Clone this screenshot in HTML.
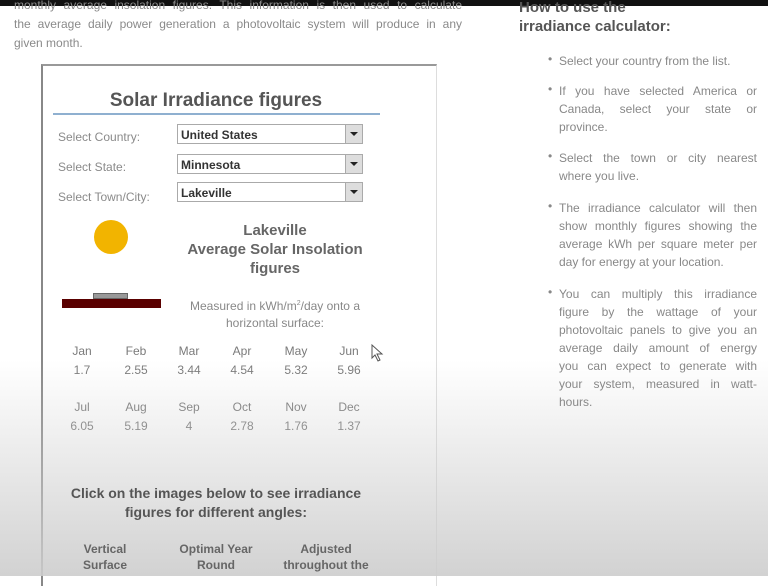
<!DOCTYPE html>
<html><head><meta charset="utf-8"><style>
body{margin:0;width:768px;height:576px;overflow:hidden;background:#fff;font-family:"Liberation Sans",sans-serif;position:relative}
.a{position:absolute;white-space:nowrap}
.g{color:#8a8a8a}
.sel{position:absolute;left:177px;width:186px;height:20px;border:1px solid #aaa;background:#fff;box-sizing:border-box}
.sel span{position:absolute;left:3px;top:3px;font-size:12px;color:#333;font-weight:bold}
.sel i{position:absolute;right:0;top:0;width:16px;height:18px;background:#ddd;border-left:1px solid #aaa}
.sel i:after{content:"";position:absolute;left:4px;top:7px;border:4px solid transparent;border-top:4px solid #222}
.m{position:absolute;width:50px;text-align:center;font-size:12px;color:#7a7a7a;line-height:19px}
.c{text-align:center;transform:translateX(-50%)}
.j{text-align:justify;text-align-last:justify;white-space:nowrap}
.l{white-space:nowrap}
.r{position:absolute;left:559px;width:198px;font-size:12px;line-height:18px;color:#888}
.b{position:absolute;left:548px;font-size:12px;color:#888}
</style></head><body>
<div class="a" style="left:0;top:0;width:768px;height:6px;background:#111"></div>
<div class="a g" style="left:14px;top:-4px;font-size:12px;line-height:19px;width:448px">
<div class="j">monthly average insolation figures. This information is then used to calculate</div>
<div class="j">the average daily power generation a photovoltaic system will produce in any</div>
<div class="l">given month.</div></div>
<div class="a" style="left:41px;top:64px;width:393px;height:520px;border-left:2px solid #888;border-top:2px solid #999;border-right:1px solid #ddd"></div>
<div class="a c" style="left:216px;top:90px;font-size:19px;font-weight:bold;color:#555">Solar Irradiance figures</div>
<div class="a" style="left:53px;top:113px;width:327px;height:2px;background:#8fb0d0"></div>
<div class="a g" style="left:58px;top:130px;font-size:12px">Select Country:</div>
<div class="a g" style="left:58px;top:160px;font-size:12px">Select State:</div>
<div class="a g" style="left:58px;top:190px;font-size:12px">Select Town/City:</div>
<div class="sel" style="top:124px"><span>United States</span><i></i></div>
<div class="sel" style="top:154px"><span>Minnesota</span><i></i></div>
<div class="sel" style="top:182px"><span>Lakeville</span><i></i></div>
<div class="a" style="left:94px;top:220px;width:34px;height:34px;border-radius:50%;background:#f2b400"></div>
<div class="a c" style="left:275px;top:221px;font-size:15px;font-weight:bold;color:#666;line-height:19px">Lakeville<br>Average Solar Insolation<br>figures</div>
<div class="a" style="left:93px;top:293px;width:35px;height:6px;background:#999;border:1px solid #666;box-sizing:border-box"></div>
<div class="a" style="left:62px;top:299px;width:99px;height:9px;background:#5a0000"></div>
<div class="a c" style="left:275px;top:295px;font-size:12px;color:#888;line-height:17px">Measured in kWh/m<sup style="font-size:7px">2</sup>/day onto a<br>horizontal surface:</div>
<div class="m" style="left:57px;top:342px">Jan<br>1.7</div>
<div class="m" style="left:111px;top:342px">Feb<br>2.55</div>
<div class="m" style="left:164px;top:342px">Mar<br>3.44</div>
<div class="m" style="left:217px;top:342px">Apr<br>4.54</div>
<div class="m" style="left:271px;top:342px">May<br>5.32</div>
<div class="m" style="left:324px;top:342px">Jun<br>5.96</div>
<div class="m" style="left:57px;top:398px">Jul<br>6.05</div>
<div class="m" style="left:111px;top:398px">Aug<br>5.19</div>
<div class="m" style="left:164px;top:398px">Sep<br>4</div>
<div class="m" style="left:217px;top:398px">Oct<br>2.78</div>
<div class="m" style="left:271px;top:398px">Nov<br>1.76</div>
<div class="m" style="left:324px;top:398px">Dec<br>1.37</div>
<svg class="a" style="left:371px;top:344px" width="14" height="18"><path d="M1 1 L1 14 L4 11 L7 17 L9 16 L6 10 L11 10 Z" fill="#fff" stroke="#555" stroke-width="1"/></svg>
<div class="a" style="left:0;top:360px;width:768px;height:216px;background:linear-gradient(rgba(220,220,220,0),rgba(205,205,205,0.9))"></div>
<div class="a c" style="left:216px;top:484px;font-size:14px;font-weight:bold;color:#555;line-height:19px">Click on the images below to see irradiance<br>figures for different angles:</div>
<div class="a c" style="left:105px;top:541px;font-size:12px;font-weight:bold;color:#666;line-height:16px">Vertical<br>Surface</div>
<div class="a c" style="left:216px;top:541px;font-size:12px;font-weight:bold;color:#666;line-height:16px">Optimal Year<br>Round</div>
<div class="a c" style="left:326px;top:541px;font-size:12px;font-weight:bold;color:#666;line-height:16px">Adjusted<br>throughout the</div>
<div class="a" style="left:519px;top:-2px;font-size:15px;font-weight:bold;color:#555;line-height:19px">How to use the<br>irradiance calculator:</div>
<div class="b" style="top:52px">•</div>
<div class="r" style="top:52px"><div class="l">Select your country from the list.</div></div>
<div class="b" style="top:82px">•</div>
<div class="r" style="top:82px"><div class="j">If you have selected America or</div><div class="j">Canada, select your state or</div><div class="l">province.</div></div>
<div class="b" style="top:149px">•</div>
<div class="r" style="top:149px"><div class="j">Select the town or city nearest</div><div class="l">where you live.</div></div>
<div class="b" style="top:199px">•</div>
<div class="r" style="top:199px"><div class="j">The irradiance calculator will then</div><div class="j">show monthly figures showing the</div><div class="j">average kWh per square meter per</div><div class="l">day for energy at your location.</div></div>
<div class="b" style="top:285px">•</div>
<div class="r" style="top:285px"><div class="j">You can multiply this irradiance</div><div class="j">figure by the wattage of your</div><div class="j">photovoltaic panels to give you an</div><div class="j">average daily amount of energy</div><div class="j">you can expect to generate with</div><div class="j">your system, measured in watt-</div><div class="l">hours.</div></div>
</body></html>
